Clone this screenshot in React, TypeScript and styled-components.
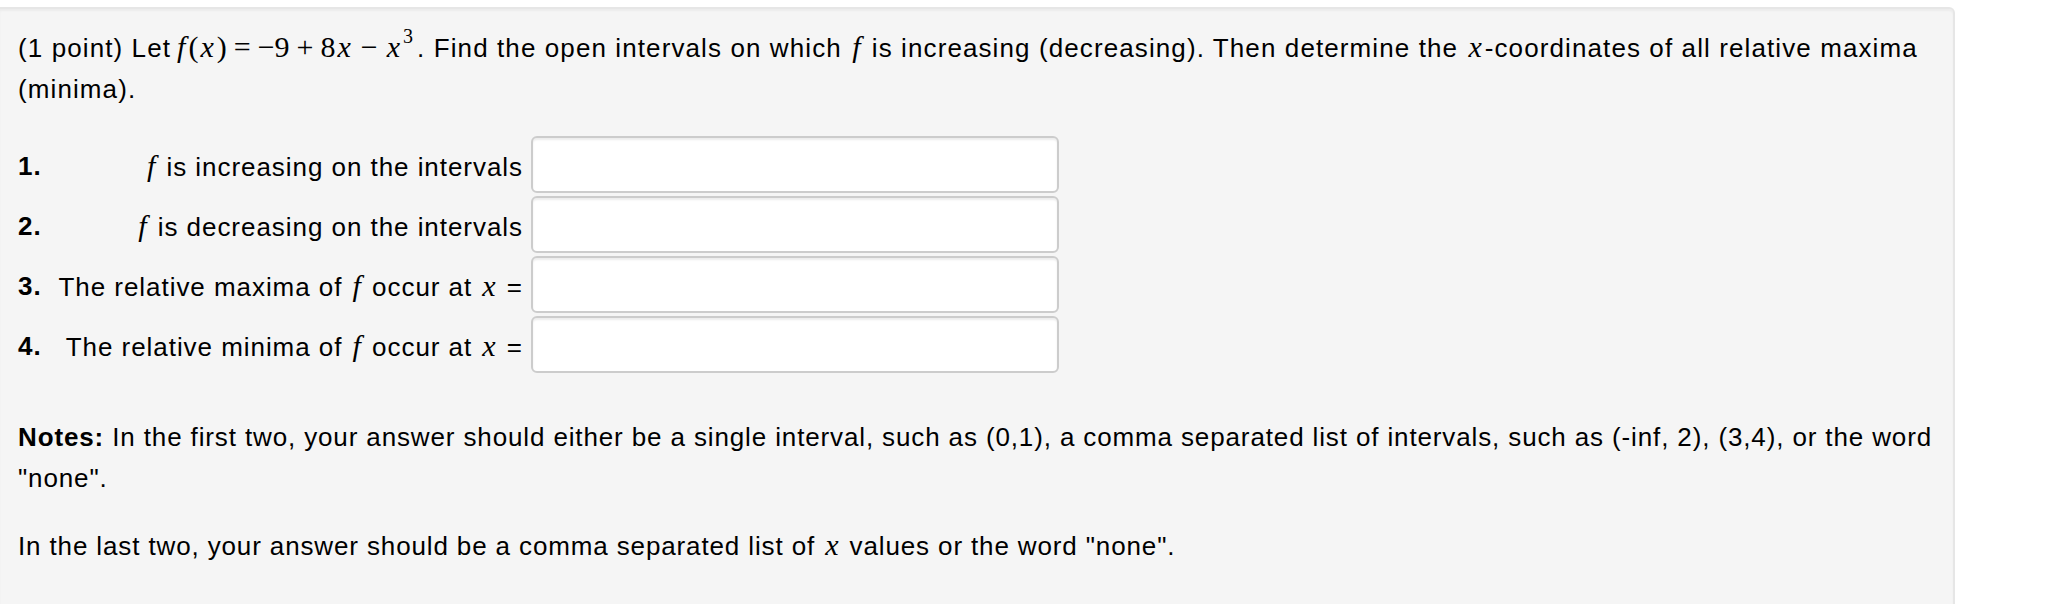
import React from "react";
import styled, { createGlobalStyle } from "styled-components";

const GlobalStyle = createGlobalStyle`
  html, body {
    margin: 0;
    padding: 0;
    background: #ffffff;
  }
  body {
    font-family: "Liberation Sans", Arial, sans-serif;
    color: #000;
  }
`;

type Answer = {
  num: string;
  label: React.ReactNode;
};

function Var({ children }: { children: React.ReactNode }) {
  return <MathVar>{children}</MathVar>;
}

const answers: Answer[] = [
  {
    num: "1.",
    label: (
      <>
        <Var>f</Var> is increasing on the intervals
      </>
    ),
  },
  {
    num: "2.",
    label: (
      <>
        <Var>f</Var> is decreasing on the intervals
      </>
    ),
  },
  {
    num: "3.",
    label: (
      <>
        The relative maxima of <Var>f</Var> occur at <Var>x</Var> =
      </>
    ),
  },
  {
    num: "4.",
    label: (
      <>
        The relative minima of <Var>f</Var> occur at <Var>x</Var> =
      </>
    ),
  },
];

const App: React.FC = () => {
  return (
    <>
      <GlobalStyle />
      <Page>
        <Well>
          <Text>
            (1 point) Let
            <MathExpr>
              <MathVar>f</MathVar>(<MathVar>x</MathVar>)<Op>=</Op>−9<Op>+</Op>8
              <MathVar>x</MathVar>
              <Op>−</Op>
              <MathVar>x</MathVar>
              <Sup>3</Sup>
            </MathExpr>
            . Find the open intervals on which <Var>f</Var> is increasing
            (decreasing). Then determine the <Var>x</Var>-coordinates of all
            relative maxima (minima).
          </Text>

          <AnswerTable>
            {answers.map((a) => (
              <React.Fragment key={a.num}>
                <Num>{a.num}</Num>
                <Label>{a.label}</Label>
                <AnswerInput type="text" aria-label={`answer ${a.num}`} />
              </React.Fragment>
            ))}
          </AnswerTable>

          <Notes>
            <b>Notes:</b> In the first two, your answer should either be a
            single interval, such as (0,1), a comma separated list of intervals,
            such as (-inf, 2), (3,4), or the word "none".
          </Notes>
          <Notes>
            In the last two, your answer should be a comma separated list of{" "}
            <Var>x</Var> values or the word "none".
          </Notes>
        </Well>
      </Page>
    </>
  );
};

const Page = styled.div`
  padding-top: 7px;
  width: 2070px;
`;

const Well = styled.div`
  width: 1955px;
  box-sizing: border-box;
  background: #f5f5f5;
  border: 2px solid #e6e6e6;
  border-left: none;
  border-radius: 0 6px 6px 0;
  box-shadow: inset 0 2px 2px rgba(0, 0, 0, 0.04);
  padding: 19px 20px 90px 18px;
`;

const Text = styled.div`
  font-size: 26px;
  letter-spacing: 1.1px;
  line-height: 41px;
  width: 1920px;
`;

const MathExpr = styled.span`
  font-family: "Liberation Serif", "Times New Roman", serif;
  font-size: 30px;
  line-height: 1;
  letter-spacing: 0;
  white-space: nowrap;
  margin: 0 4px 0 4px;
`;

const MathVar = styled.i`
  font-family: "Liberation Serif", "Times New Roman", serif;
  font-size: 30px;
  line-height: 1;
  font-style: italic;
  letter-spacing: 0;
  padding: 0 3px 0 2px;
`;

const Op = styled.span`
  padding: 0 7px;
`;

const Sup = styled.sup`
  font-size: 20px;
  line-height: 0;
  vertical-align: 14px;
`;

const AnswerTable = styled.div`
  display: grid;
  grid-template-columns: 40px 473px 528px;
  grid-auto-rows: 57px;
  row-gap: 3px;
  align-items: center;
  margin-top: 26px;
  font-size: 26px;
  letter-spacing: 0.95px;
`;

const Num = styled.div`
  font-weight: bold;
  padding-top: 4px;
`;

const Label = styled.div`
  text-align: right;
  padding-right: 8px;
  padding-top: 4px;
  white-space: nowrap;
`;

const AnswerInput = styled.input`
  box-sizing: border-box;
  width: 528px;
  height: 57px;
  border: 2px solid #cccccc;
  border-radius: 6px;
  background: #ffffff;
  box-shadow: inset 0 2px 2px rgba(0, 0, 0, 0.075);
  outline: none;
  font-size: 24px;
`;

const Notes = styled.p`
  font-size: 26px;
  letter-spacing: 0.87px;
  line-height: 41px;
  margin: 44px 0 0;
  width: 1920px;

  & + & {
    margin-top: 27px;
  }
`;

export default App;
